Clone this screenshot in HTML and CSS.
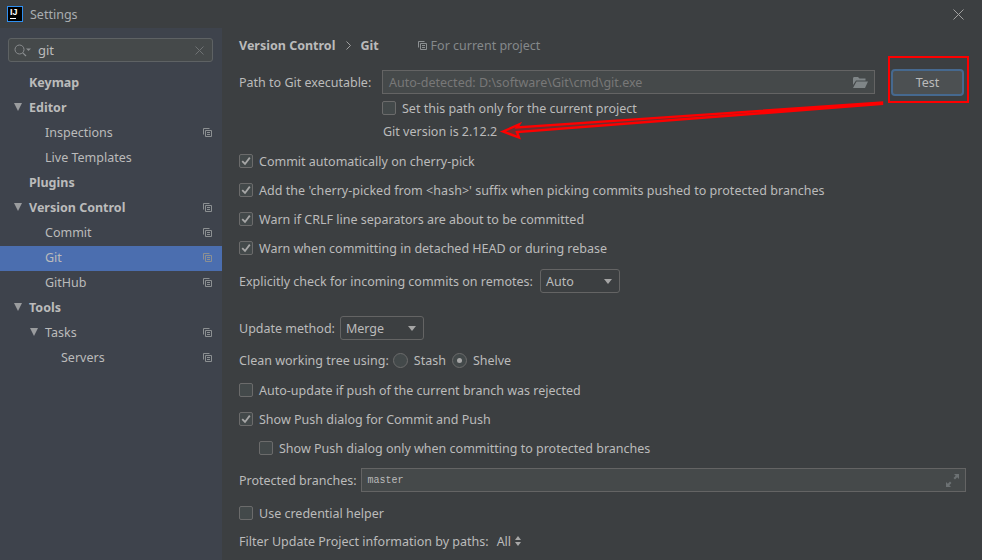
FILE: index.html
```html
<!DOCTYPE html>
<html lang="en">
<head>
<meta charset="utf-8">
<title>Settings</title>
<link rel="stylesheet" href="styles.css">
</head>
<body>
<svg width="0" height="0" class="defs">
  <defs>
    <symbol id="copy" viewBox="0 0 9 9">
      <path d="M.5 6.500V.5H6.500M2.500 2.500H8.500V8.500H2.500ZM4 4.500H7M4 6.500H7" fill="none" stroke="currentColor"/>
    </symbol>
    <symbol id="check" viewBox="0 0 14 14">
      <path d="M3.200 7.200L6 10L10.800 3.600" fill="none" stroke="#a7a7a7" stroke-width="1.800"/>
    </symbol>
  </defs>
</svg>
<div class="window">
  <header class="titlebar">
    <div class="logo"><span class="logo-text">IJ</span><span class="logo-bar"></span></div>
    <span class="title">Settings</span>
    <svg class="close" width="11" height="11" viewBox="0 0 11 11"><path d="M.5 .5L10.500 10.500M10.500 .5L.5 10.500" stroke="#a0a0a0" fill="none"/></svg>
  </header>
  <div class="body">
    <aside class="sidebar">
      <div class="search">
        <svg class="search-icon" width="17" height="13" viewBox="0 0 17 13"><circle cx="5.500" cy="5.500" r="4.500" fill="none" stroke="#8a8d8f"/><path d="M8.800 8.800L12 12" stroke="#8a8d8f" fill="none" stroke-width="1.200"/><path d="M12 4.500H17L14.500 7Z" fill="#8a8d8f"/></svg>
        <span class="search-text">git</span>
        <svg class="search-clear" width="9" height="9" viewBox="0 0 9 9"><path d="M.5 .5L8.500 8.500M8.500 .5L.5 8.500" stroke="#6f7274" fill="none"/></svg>
      </div>
      <ul class="tree">
        <li class="node bold lvl0"><span class="label">Keymap</span></li>
        <li class="node bold lvl0"><i class="tri"></i><span class="label">Editor</span></li>
        <li class="node lvl1"><span class="label">Inspections</span><svg class="copy"><use href="#copy"/></svg></li>
        <li class="node lvl1"><span class="label">Live Templates</span></li>
        <li class="node bold lvl0"><span class="label">Plugins</span></li>
        <li class="node bold lvl0"><i class="tri"></i><span class="label">Version Control</span><svg class="copy"><use href="#copy"/></svg></li>
        <li class="node lvl1"><span class="label">Commit</span><svg class="copy"><use href="#copy"/></svg></li>
        <li class="node lvl1 selected"><span class="label">Git</span><svg class="copy"><use href="#copy"/></svg></li>
        <li class="node lvl1"><span class="label">GitHub</span><svg class="copy"><use href="#copy"/></svg></li>
        <li class="node bold lvl0"><i class="tri"></i><span class="label">Tools</span></li>
        <li class="node lvl1"><i class="tri"></i><span class="label">Tasks</span><svg class="copy"><use href="#copy"/></svg></li>
        <li class="node lvl2"><span class="label">Servers</span><svg class="copy"><use href="#copy"/></svg></li>
      </ul>
    </aside>
    <main class="content">
      <div class="crumbs">
        <b>Version Control</b>
        <svg class="crumb-sep" width="5" height="9" viewBox="0 0 5 9"><path d="M.5 .5L4.500 4.500L.5 8.500" fill="none" stroke="#a0a0a0"/></svg>
        <b>Git</b>
        <svg class="crumb-copy"><use href="#copy"/></svg>
        <span class="crumb-note">For current project</span>
      </div>
      <div class="row path-row">
        <span class="path-label">Path to Git executable:</span>
        <div class="field path-field">
          <span class="muted">Auto-detected: D:\software\Git\cmd\git.exe</span>
          <svg class="folder" width="15" height="11" viewBox="0 0 15 11"><path d="M0 1.500Q0 0 1 0H5L6.500 1.500H12.500V3.500H3L0 8Z" fill="#7f8587"/><path d="M3.500 4.500H15L12 11H0Z" fill="#7f8587"/></svg>
        </div>
        <button class="test" type="button">Test</button>
      </div>
      <label class="row check sub set-path"><span class="box"></span>Set this path only for the current project</label>
      <div class="row sub version">Git version is 2.12.2</div>
      <label class="row check c1"><span class="box"><svg class="tick"><use href="#check"/></svg></span>Commit automatically on cherry-pick</label>
      <label class="row check c2 long"><span class="box"><svg class="tick"><use href="#check"/></svg></span>Add the 'cherry-picked from &lt;hash&gt;' suffix when picking commits pushed to protected branches</label>
      <label class="row check c2"><span class="box"><svg class="tick"><use href="#check"/></svg></span>Warn if CRLF line separators are about to be committed</label>
      <label class="row check c2"><span class="box"><svg class="tick"><use href="#check"/></svg></span>Warn when committing in detached HEAD or during rebase</label>
      <div class="row combo-row incoming">Explicitly check for incoming commits on remotes:
        <div class="combo combo-auto"><span>Auto</span><i class="combo-arrow"></i></div>
      </div>
      <div class="row combo-row update">Update method:
        <div class="combo combo-merge"><span>Merge</span><i class="combo-arrow"></i></div>
      </div>
      <div class="row clean">Clean working tree using:
        <span class="radio"></span><span>Stash</span>
        <span class="radio on"></span><span>Shelve</span>
      </div>
      <label class="row check c1"><span class="box"></span>Auto-update if push of the current branch was rejected</label>
      <label class="row check c2"><span class="box"><svg class="tick"><use href="#check"/></svg></span>Show Push dialog for Commit and Push</label>
      <label class="row check c2 indent"><span class="box"></span>Show Push dialog only when committing to protected branches</label>
      <div class="row protected">
        <span>Protected branches:</span>
        <div class="field protected-field">
          <span class="mono">master</span>
          <svg class="expand" width="13" height="13" viewBox="0 0 13 13"><path d="M8 0H13V5L11.200 3.300L9 5.500L7.500 4L9.700 1.800ZM5 13H0V8L1.800 9.700L4 7.500L5.500 9L3.300 11.200Z" fill="#6c7173"/></svg>
        </div>
      </div>
      <label class="row check cred"><span class="box"></span>Use credential helper</label>
      <div class="row filter">Filter Update Project information by paths:
        <span class="filter-val">All</span>
        <svg class="updown" width="6" height="10" viewBox="0 0 6 10"><path d="M3 0L6 4H0ZM3 10L0 6H6Z" fill="#a8a8a8"/></svg>
      </div>
    </main>
  </div>
  <svg class="annot" width="982" height="560" viewBox="0 0 982 560">
    <rect x="889" y="57" width="79" height="45" fill="none" stroke="#fe0000" stroke-width="2"/>
    <path d="M503 131.500L519 124.500L517 127.500L882 102.500V104L517 132L519 137.500Z" fill="#fe0000" fill-opacity=".25" stroke="#fe0000" stroke-width="2.400" stroke-linejoin="miter"/>
  </svg>
</div>
</body>
</html>
```
FILE: styles.css
```css
* { box-sizing: border-box; }
html, body { margin: 0; padding: 0; }
body { background: #3c3f41; color: #bbbbbb; font: 12.5px/20px "Noto Sans", "Open Sans", sans-serif; overflow: hidden; }
.defs { position: absolute; }
.window { position: relative; width: 982px; height: 560px; display: flex; flex-direction: column; overflow: hidden; }

.titlebar { height: 28px; flex: none; display: flex; align-items: center; padding: 0 18px 0 7px; background: #3c3f41; }
.logo { position: relative; width: 16px; height: 16px; background: #000; border: 1px solid #2f8ff0; margin-right: 7px; }
.logo-text { position: absolute; left: 2px; top: 1px; font: bold 9px/9px "Liberation Sans", sans-serif; color: #fff; }
.logo-bar { position: absolute; left: 2px; bottom: 2px; width: 6px; height: 1px; background: #fff; }
.title { color: #a9adb0; margin-top: 2px; }
.close { margin-left: auto; }

.body { flex: 1; display: flex; min-height: 0; }
.sidebar { width: 222px; flex: none; background: #3e434c; padding-top: 10px; }
.search { height: 24px; margin: 0 9px 0 8px; display: flex; align-items: center; background: #45494a; border: 1px solid #5e6264; border-radius: 3px; padding: 0 8px 0 5px; }
.search-icon { margin-right: 7px; }
.search-text { flex: 1; font-size: 13px; }
.tree { list-style: none; margin: 9px 0 0; padding: 0; }
.node { position: relative; height: 25px; display: flex; align-items: center; padding: 0 10px 1px 0; }
.node.bold { font-weight: 700; }
.lvl0 { padding-left: 29px; }
.lvl1 { padding-left: 45px; }
.lvl2 { padding-left: 61px; }
.node.selected { background: #4b6eaf; }
.tri { position: absolute; margin: 0 0 2px -15px; width: 0; height: 0; border-left: 4.5px solid transparent; border-right: 4.5px solid transparent; border-top: 8px solid #9a9c9e; }
.copy { width: 9px; height: 9px; margin: 0 0 2px auto; color: #8c9092; }

.content { flex: 1; min-width: 0; padding: 5px 16px 0 17px; display: flex; flex-direction: column; align-items: stretch; }
.row { display: flex; align-items: center; height: 20px; flex: none; padding-top: 2px; }
.crumbs { display: flex; align-items: center; height: 24px; flex: none; padding-top: 2px; }
.crumb-sep { margin: 0 9px 2px 11px; }
.crumb-copy { width: 9px; height: 9px; margin: 0 4px 2px 39px; color: #8c9092; }
.crumb-note { color: #85898b; }
.path-row { height: 24px; margin-top: 13px; }
.path-label { width: 143px; flex: none; }
.field { height: 24px; margin-bottom: 2px; display: flex; align-items: center; background: #45494a; border: 1px solid #646464; padding: 2px 6px 0 6px; }
.path-field { flex: 1; justify-content: space-between; }
.folder, .expand { margin-bottom: 2px; }
.muted { color: #787878; }
.test { width: 73px; height: 27px; flex: none; margin: 0 2px 2px 16px; padding: 1px 0 0; background: #4c5052; border: 2.5px solid #46698f; border-radius: 4px; color: #bbbbbb; font: inherit; }
.sub { margin-left: 143px; }
.set-path { margin-top: 4px; }
.version { margin-top: 3px; padding-left: 1px; }
.check { gap: 6px; }
.long { letter-spacing: .04px; }
.box { width: 14px; height: 14px; flex: none; display: block; margin-bottom: 2px; background: #43494a; border: 1px solid #6b6b6b; border-radius: 2px; position: relative; }
.tick { position: absolute; left: -1px; top: -1px; width: 14px; height: 14px; }
.c1 { margin-top: 10px; }
.c2 { margin-top: 9px; }
.indent { margin-left: 20px; }
.combo-row { height: 24px; gap: 7px; }
.incoming { margin-top: 11px; }
.update { margin-top: 23px; gap: 5px; }
.combo { height: 24px; margin-bottom: 2px; display: flex; align-items: center; justify-content: space-between; border: 1px solid #646464; border-radius: 3px; padding: 2px 7px 0 5px; background: #3c3f41; }
.combo-auto { width: 80px; }
.combo-merge { width: 84px; }
.combo-arrow { width: 0; height: 0; margin-bottom: 2px; border-left: 4.5px solid transparent; border-right: 4.5px solid transparent; border-top: 5px solid #a5a5a5; }
.clean { margin-top: 10px; }
.radio { width: 15px; height: 15px; flex: none; border: 1px solid #6b6b6b; border-radius: 50%; background: #43494a; position: relative; margin: 0 6px 2px 4px; }
.radio.on { margin-left: 6px; }
.radio.on::after { content: ""; position: absolute; left: 4px; top: 4px; width: 5px; height: 5px; border-radius: 50%; background: #a7a7a7; }
.protected { height: 24px; margin-top: 10px; gap: 4px; }
.protected-field { flex: 1; justify-content: space-between; }
.mono { font: 10px/12px "Liberation Mono", monospace; color: #bbbbbb; }
.cred { margin-top: 11px; }
.filter { margin-top: 8px; }
.filter-val { margin-left: 8px; }
.updown { margin: 0 0 2px 4px; }
.annot { position: absolute; left: 0; top: 0; pointer-events: none; }
```
